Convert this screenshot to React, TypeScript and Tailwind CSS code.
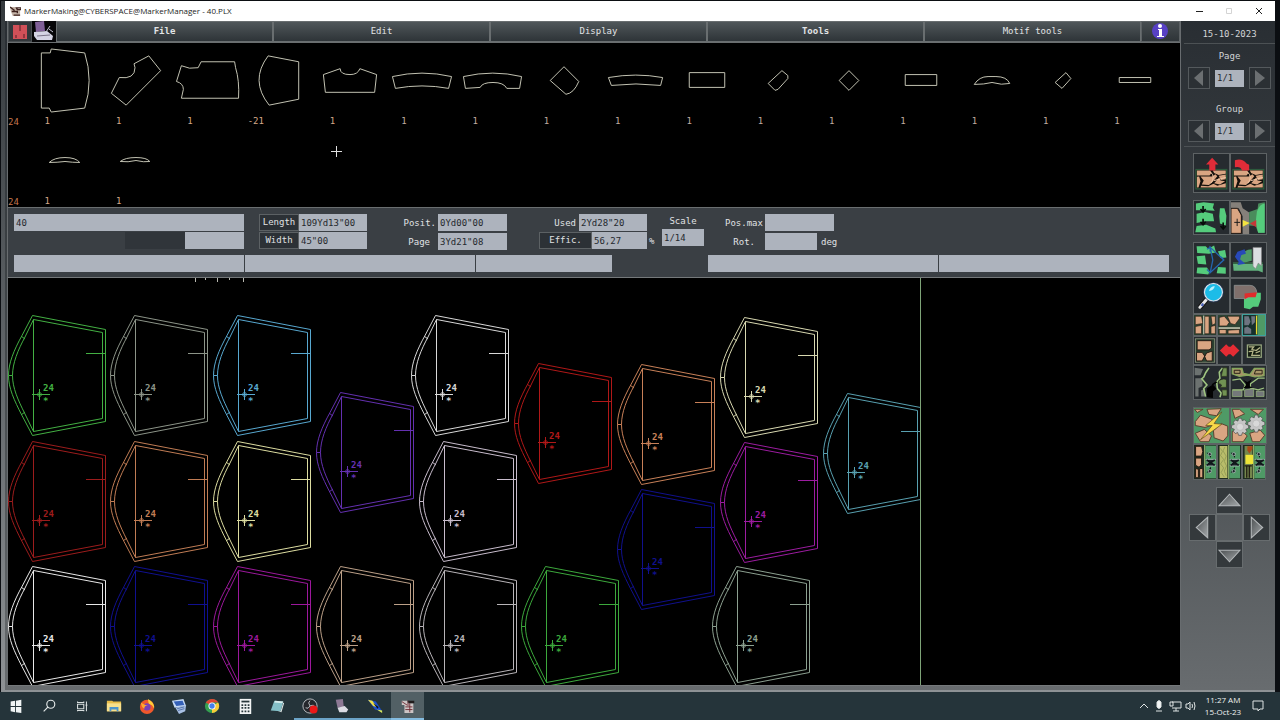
import type { ReactNode } from 'react';

const MENUS = [
  { label: 'File', bold: true },
  { label: 'Edit', bold: false },
  { label: 'Display', bold: false },
  { label: 'Tools', bold: true },
  { label: 'Motif tools', bold: false },
];

// outlines are centred on 0,0
const PIECES = [
  { qty: '1', d: 'M-24-28L-15-28L-14-32L20-28Q29 0 20 28L-14 32L-16 28L-24 28Z' },
  { qty: '1', d: 'M13-25L25-10L-10 25L-25 13L-17-3Q-1-1 -1-13L-2-17Z' },
  { qty: '1', d: 'M-27-15Q-19-11 -10-13L-7-19L27-19L28-13Q32 0 31 18L-27 18L-25 9Q-25 3 -32 1Z' },
  { qty: '-21', d: 'M-11-25L20-19L20 19L-10 25Q-30 0 -11-25Z' },
  { qty: '1', d: 'M-27-6L-10-12Q-10-6 0-6Q8-6 10-12L27-6L25 12L-25 12Z' },
  { qty: '1', d: 'M-30-4Q0-11 30-4L27 8Q0 3 -27 8Z' },
  { qty: '1', d: 'M-30-4Q0-11 29-4L27 8L14 8Q11 2 0 2Q-11 2 -13 7L-28 8Z' },
  { qty: '1', d: 'M0-14L15 1Q10 13 2 14L-14 0Z' },
  { qty: '1', d: 'M-28-3Q0-8 27-3L25 5Q0 2 -25 5Z' },
  { qty: '1', d: 'M-18-8H18V7H-18Z' },
  { qty: '1', d: 'M4-10L10-5L10-2L0 9L-3 10L-10 3Z' },
  { qty: '1', d: 'M0-10L10 0L0 10L-10 0Z' },
  { qty: '1', d: 'M-16-6H16V5H-16Z' },
  { qty: '1', d: 'M-18 4Q-13-4 -4-4H4Q15-4 18 3Q10 5 0 2Q-8 4 -18 4Z' },
  { qty: '1', d: 'M3-8L8-2L-1 8L-8 2Z' },
  { qty: '1', d: 'M-16-3H16V2H-16Z' },
  { qty: '1', d: 'M-16 2Q-11-3 0-3Q11-3 15 2Q8 2 0 1Q-8 2 -16 2Z' },
  { qty: '1', d: 'M-16 1Q-11-3 0-3Q11-3 14 1Q8 2 0 0Q-8 2 -16 1Z' },
];

const PLACED = [
  { x: 0, y: 37, color: '#43b043' },
  { x: 102, y: 37, color: '#8c9488' },
  { x: 205, y: 37, color: '#58a8d0' },
  { x: 308, y: 114, color: '#6430b0' },
  { x: 403, y: 37, color: '#d8d8d8' },
  { x: 506, y: 85, color: '#b01818' },
  { x: 609, y: 86, color: '#c88058' },
  { x: 712, y: 39, color: '#d8d8b0' },
  { x: 815, y: 115, color: '#58a0b0' },
  { x: 0, y: 163, color: '#9c1c1c' },
  { x: 102, y: 163, color: '#c07c54' },
  { x: 205, y: 163, color: '#dcdca0' },
  { x: 411, y: 163, color: '#c8bccc' },
  { x: 712, y: 164, color: '#9c1ca0' },
  { x: 609, y: 211, color: '#10108c' },
  { x: 0, y: 288, color: '#e8e8e8' },
  { x: 102, y: 288, color: '#101090' },
  { x: 205, y: 288, color: '#9c189c' },
  { x: 308, y: 288, color: '#bca088' },
  { x: 411, y: 288, color: '#b8b4b8' },
  { x: 513, y: 288, color: '#3ca83c' },
  { x: 704, y: 288, color: '#8ca090' },
];

const FIELD = 'bg-[#adb3bd] text-[#25292e] px-[2px] outline-none min-w-0';

function Field({ id, label, value, className }: { id: string; label?: string; value: string; className: string }) {
  return <input id={id} aria-label={label} defaultValue={value} className={`${FIELD} ${className}`} />;
}

function Piece({ d }: { d: string }) {
  return (
    <svg viewBox="-36 -34 72 68" className="mx-auto block h-[68px] w-[72px]" fill="none" stroke="#c4c4b4" strokeWidth="1">
      <path d={d} />
    </svg>
  );
}

function PlacedPiece({ x, y, color }: { x: number; y: number; color: string }) {
  return (
    <div className="absolute h-[122px] w-[100px]" style={{ left: x, top: y, color }}>
      <svg viewBox="0 0 100 122" className="block h-full w-full" fill="none" stroke="currentColor" strokeWidth="1">
        <path d="M24.5 .5L97.5 14.5V106.5L24.5 120.5L14 100.5C6 85 .5 73 .5 60.5C.5 48 6 35 14 20.5Z" />
        <path d="M25.5 4.5L94.5 17.5V103.5L25.5 116.5L17 99C10 85 4.5 73 4.5 60.5C4.5 48 10 35 17 22Z" />
        <path d="M25.5 4.5V116.5M78 38.5H98M.5 60.5H4.5M13 21L17 24M13 100L17 97" />
        <path d="M24 79.5H42M31.5 74V85M31.5 77L34 79.5L31.5 82L29 79.5Z" />
      </svg>
      <span className="absolute left-[35px] top-[67px] text-[9px] font-bold leading-[12px]">24</span>
      <span className="absolute left-[35px] top-[80px] text-[9px] font-bold leading-[12px]">*</span>
    </div>
  );
}

function ToolButton({ label, className = 'border-[#5d6264]', children }: { label: string; className?: string; children: ReactNode }) {
  return (
    <button aria-label={label} className={`min-h-0 border bg-[#262b2f] ${className}`}>
      {children}
    </button>
  );
}

function Art({ box = '0 0 108 108', children }: { box?: string; children: ReactNode }) {
  return (
    <svg viewBox={box} preserveAspectRatio="none" className="block h-full w-full">
      {children}
    </svg>
  );
}

const TAN = '#d9a582';
const GREEN = '#55cc7c';
const LEAF = '#4f9a66';

function Bricks() {
  return (
    <g>
      <rect x="4" y="47" width="99" height="65" fill="#2c5a3c" />
      <rect x="8" y="51" width="91" height="57" fill="#15100c" />
      <g fill={TAN}>
        <path d="M9 52H50L54 60L48 68H9ZM58 52H98V62L76 66L62 60Z" />
        <path d="M9 72L16 71L20 86L14 106H9ZM20 71H56L66 64L72 70L58 88L46 98L24 96L30 84Z" />
        <path d="M76 69L98 65V80L84 82ZM62 92L78 74L82 84L96 86L80 96ZM22 100L44 102L60 94L72 100L98 92V106H20Z" />
      </g>
      <path d="M50 56Q68 72 52 92M62 84L98 74" stroke="#f0c8a8" strokeWidth="3" fill="none" />
    </g>
  );
}

function Arrow({ dir }: { dir: 'up' | 'down' | 'left' | 'right' }) {
  const shapes = {
    up: 'M2 17L12 6L22 17Z',
    down: 'M2 8H22L12 19Z',
    left: 'M17 2V22L6 12Z',
    right: 'M7 2V22L18 12Z',
  };
  return (
    <svg viewBox="0 0 24 24" className="block h-full w-full">
      <defs>
        <linearGradient id={`shade-${dir}`} x1="0" x2="1" y1="0" y2="1">
          <stop offset="0" stopColor="#4c5052" />
          <stop offset="1" stopColor="#a4a8aa" />
        </linearGradient>
      </defs>
      <path d={shapes[dir]} fill={`url(#shade-${dir})`} stroke="#b4b8ba" strokeWidth="1" />
    </svg>
  );
}

function Pager({ label, id }: { label: string; id: string }) {
  return (
    <div className="flex h-[53px] flex-col items-center">
      <label htmlFor={id} className="h-[22px] leading-[22px]">{label}</label>
      <div className="flex h-[22px] items-center gap-[5px]">
        <button aria-label={`${label} back`} className="h-[22px] w-[22px] border border-[#54595c] bg-[#2b3034]">
          <svg viewBox="0 0 20 20" className="block h-full w-full"><path d="M14 2V18L5 10Z" fill="#6b6f71" /></svg>
        </button>
        <Field id={id} value="1/1" className="h-[17px] w-[29px]" />
        <button aria-label={`${label} forward`} className="h-[22px] w-[22px] border border-[#54595c] bg-[#2b3034]">
          <svg viewBox="0 0 20 20" className="block h-full w-full"><path d="M5 2V18L15 10Z" fill="#6b6f71" /></svg>
        </button>
      </div>
    </div>
  );
}

const GEAR = 'M-4-24H4L6-17L12-20L18-14L15-8L24-4V4L16 7L19 13L13 19L7 16L4 24H-4L-7 16L-13 19L-19 13L-16 7L-24 4V-4L-16-7L-19-13L-13-19L-6-16Z';

function NestedStrip({ kind }: { kind: 'pieces' | 'plain' | 'marked' }) {
  return (
    <Art box="0 0 72 104">
      <rect width="72" height="104" fill="#1c2a20" />
      <rect x="36" y="2" width="34" height="100" fill={LEAF} />
      {kind === 'pieces' && (
        <g fill={TAN} stroke="#22180f" strokeWidth="3">
          <path d="M5 4H24L28 20L24 34H5ZM5 40H24V60L16 68L5 62ZM5 72L14 74V100H5ZM18 72H28V100H18Z" />
        </g>
      )}
      {kind === 'plain' && (
        <g>
          <rect x="5" y="3" width="25" height="98" fill="#b9bd6a" />
          <path d="M8 10L14 20L8 32L18 44L8 58L18 70L10 84L20 98M22 6L16 18L26 34L20 50L27 64L20 80L26 94" stroke="#83904c" strokeWidth="2" fill="none" />
        </g>
      )}
      {kind === 'marked' && (
        <g>
          <rect x="5" y="3" width="25" height="98" fill="#74864c" />
          <path d="M14 4H30V12L20 26L14 16Z" fill="#a84818" />
          <rect x="8" y="30" width="24" height="28" fill="#eee438" />
          <path d="M5 64H28M12 64V100M20 66V100" stroke="#1d1710" strokeWidth="4" />
        </g>
      )}
      <path d="M34 0V104" stroke="#a8c878" strokeWidth="3" />
      <path d="M40 24L54 40V24ZM40 84L54 66V84Z" fill="#11181a" />
      <g stroke="#cdd8d8" strokeWidth="2" fill="#1b2428">
        <circle cx="50" cy="28" r="5" />
        <circle cx="50" cy="80" r="5" />
        <path d="M38 44H68L58 54L68 64H38L46 54Z" />
      </g>
      <path d="M40 46L66 62M66 46L40 62" stroke="#10181a" strokeWidth="5" />
    </Art>
  );
}

function ToolPalette() {
  return (
    <div className="mx-auto flex w-[74px] flex-col gap-[7px]">
      <div className="grid h-[40px] grid-cols-2">
        <ToolButton label="Take out">
          <Art box="0 0 108 120">
            <Bricks />
            <path d="M56 12L75 33H66V52H47V33H37Z" fill="#e02c38" />
          </Art>
        </ToolButton>
        <ToolButton label="Swap out">
          <Art box="0 0 108 120">
            <Bricks />
            <path d="M12 20Q34 12 48 30L56 34V52H34Q30 38 12 42Z" fill="#e02c38" />
          </Art>
        </ToolButton>
      </div>

      <div className="grid h-[35px] grid-cols-2">
        <ToolButton label="Drop pieces">
          <Art>
            <path d="M6 8L30 4L62 8L58 22L64 32L36 30L6 30ZM8 42L34 36L58 42L62 66L34 66L8 72ZM8 82L38 78L66 90L68 102L4 102ZM80 24L94 24L100 48L98 80L80 74L78 50Z" fill={GREEN} />
            <path d="M28 16V34M28 58V76M90 70V90M20 26L28 36L36 26M20 68L28 78L36 68M82 82L90 92L98 82" stroke="#060c08" strokeWidth="5" fill="none" />
          </Art>
        </ToolButton>
        <ToolButton label="Bring together">
          <Art>
            <path d="M0 4H30L36 24L56 38V108H36V50L24 24H0Z" fill="#85807a" />
            <path d="M0 24H20L32 46V106H0Z" fill={TAN} stroke="#1b1410" strokeWidth="3" />
            <path d="M56 36L82 26L84 8L104 4V104H84L76 82L56 80Z" fill="#4a8c5c" />
            <path d="M80 34Q88 10 104 8V104H84L76 70Z" fill={GREEN} />
            <path d="M10 70H28M19 58V82" stroke="#181818" strokeWidth="3" />
            <path d="M36 62L58 72L36 84Z" fill="#f4e440" />
            <path d="M78 62L58 74L78 86Z" fill="#c43838" />
          </Art>
        </ToolButton>
      </div>

      <div>
        <div className="grid h-[36px] grid-cols-2">
          <ToolButton label="Rotate group">
            <Art>
              <path d="M8 10H36L44 18L62 8L68 30L46 34L10 32ZM8 42L34 40L38 68L12 66ZM10 78H40L48 90L44 100L8 96ZM74 26L96 22L100 46L82 48ZM74 76L98 78V98L70 96Z" fill={GREEN} />
              <path d="M50 14L92 54L50 94L58 54ZM40 20L50 14V28M84 44L92 54L80 64M50 94L40 84" stroke="#2466b0" strokeWidth="4" fill="none" />
            </Art>
          </ToolButton>
          <ToolButton label="Flip">
            <Art>
              <path d="M24 50Q34 22 64 20V56L34 64Z" fill={LEAF} />
              <path d="M6 62H98V94L84 88H8Z" fill="#62b27e" />
              <path d="M6 64H100" stroke="#17321e" strokeWidth="3" />
              <path d="M68 14H94V72L84 64L76 82L68 74Z" fill="#dcdfe2" stroke="#888" strokeWidth="2" />
              <path d="M42 20L20 28L12 44L24 60L20 70L44 66L28 52L32 38L46 34Z" fill="#2849b8" />
            </Art>
          </ToolButton>
        </div>
        <div className="grid h-[36px] grid-cols-2">
          <ToolButton label="Zoom">
            <Art>
              <path d="M38 66L18 90" stroke="#151515" strokeWidth="16" />
              <path d="M38 66L18 90" stroke="#e8e8e8" strokeWidth="9" strokeLinecap="round" />
              <path d="M28 78L24 86" stroke="#4860b8" strokeWidth="7" />
              <circle cx="60" cy="42" r="28" fill="#1cbce8" stroke="#d8e0e8" strokeWidth="4" />
              <circle cx="60" cy="42" r="31" fill="none" stroke="#20365c" strokeWidth="2" />
              <path d="M46 38Q50 24 64 22Q62 36 46 38Z" fill="#b8f2ff" />
            </Art>
          </ToolButton>
          <ToolButton label="Overlap">
            <Art>
              <path d="M42 44H92V64L84 88H68L58 96L40 92V64Z" fill={GREEN} />
              <path d="M10 20H58Q78 20 80 46L48 62H10Z" fill="#80706c" stroke="#98a0a0" strokeWidth="2" />
              <path d="M42 46L80 42L76 58H52L42 64Z" fill="#e02c2c" />
            </Art>
          </ToolButton>
        </div>
        <div className="grid h-[22px] grid-cols-3">
          <ToolButton label="Align columns">
            <Art box="0 0 72 66">
              <rect width="72" height="66" fill="#2c4434" />
              <path d="M4 4H24L28 28L4 32ZM4 38L24 34V62H4ZM34 4H48V62H34ZM54 4H68V28L58 34ZM54 38L68 34V62H54Z" fill={TAN} stroke="#1e1610" strokeWidth="2" />
              <path d="M31 2V64" stroke="#e8ead0" strokeWidth="3" />
            </Art>
          </ToolButton>
          <ToolButton label="Align rows">
            <Art box="0 0 72 66">
              <rect width="72" height="66" fill="#2c4434" />
              <path d="M4 8L20 4L36 24L28 36H4ZM30 4H68V12L54 32L40 28ZM4 48H26V62H4ZM32 50L68 48V62H32Z" fill={TAN} stroke="#1e1610" strokeWidth="2" />
              <path d="M2 43H70" stroke="#f4f0d8" strokeWidth="4" />
            </Art>
          </ToolButton>
          <ToolButton label="Column limit" className="border-[#3fa09c]">
            <Art box="0 0 72 66">
              <rect width="72" height="66" fill="#16302c" />
              <path d="M4 4H18L24 22L18 34H4ZM4 42L14 38L26 46V62H4ZM26 4H38V24L28 34Z" fill="#6d7480" />
              <rect x="46" y="0" width="26" height="66" fill={LEAF} />
              <path d="M43 2V64" stroke="#e8d830" strokeWidth="4" />
            </Art>
          </ToolButton>
        </div>
        <div className="grid h-[29px] grid-cols-3">
          <ToolButton label="Frame">
            <Art box="0 0 72 88">
              <rect x="4" y="6" width="62" height="76" fill="#2b4030" stroke="#a8b090" strokeWidth="2" />
              <path d="M10 12H56V36L48 42H10ZM8 50H26L34 62L26 78H8ZM40 52L58 46V78H40L34 64Z" fill={TAN} stroke="#1e1610" strokeWidth="3" />
            </Art>
          </ToolButton>
          <ToolButton label="Shift sideways">
            <Art box="0 0 72 88">
              <path d="M6 44L26 24L34 32H40L48 24L68 44L48 64L40 56H34L26 64Z" fill="#e42c34" />
            </Art>
          </ToolButton>
          <ToolButton label="Fit all">
            <Art box="0 0 72 88">
              <rect x="14" y="26" width="44" height="40" fill="#131c10" stroke="#98a880" strokeWidth="4" />
              <path d="M18 32H34L28 40L42 44L54 34M18 48L32 46L28 60H54M40 52L54 46" stroke="#b4b488" strokeWidth="4" fill="none" />
            </Art>
          </ToolButton>
        </div>
        <div className="grid h-[35px] grid-cols-2">
          <ToolButton label="Split marker">
            <Art>
              <path d="M2 6L28 10L20 30H2ZM4 40H26V66L14 72V100H4ZM22 80L34 74V100H22Z" fill="#6c7270" />
              <path d="M46 6L36 22L30 36L24 42L40 62L30 74L36 100M88 6L78 20L80 40L70 52L72 74L84 88L80 102" stroke="#9fc480" strokeWidth="5" fill="none" />
              <path d="M90 6H102V34L84 34ZM76 48Q94 38 100 46V70H80Q92 60 76 58ZM86 78H102V98H88Z" fill="#719253" stroke="#252a16" strokeWidth="2" />
              <path d="M42 100V74L58 64L66 74L56 82V102ZM56 62L70 52" fill="#030303" stroke="#030303" strokeWidth="5" />
            </Art>
          </ToolButton>
          <ToolButton label="Join marker">
            <Art>
              <path d="M4 8H34L38 24L58 28L72 8H102V32L74 36L52 30L26 34L4 26Z" fill="#a89668" stroke="#86a85c" strokeWidth="4" />
              <path d="M10 14H28V24H10ZM76 14H96V26H72Z" fill="none" stroke="#241e14" strokeWidth="3" />
              <path d="M4 46L28 42L44 62L38 78H4M104 40H84L60 58V72L84 78L102 72" stroke="#9fc480" strokeWidth="4" fill="none" />
              <path d="M4 80H34V100H4ZM42 78L70 74V100H42ZM78 82H102V100H78Z" fill="#74787a" stroke="#9fc480" strokeWidth="2" />
              <path d="M36 44L50 52L64 44L58 56V66L68 72H38L46 64V56Z" fill="#020202" />
            </Art>
          </ToolButton>
        </div>
      </div>

      <div>
        <div className="grid h-[37px] grid-cols-2">
          <ToolButton label="Quick nest">
            <Art>
              <rect width="108" height="108" fill={LEAF} />
              <path d="M2 4H28L10 14ZM40 4L84 2L70 24L46 20ZM4 42L20 22L54 34L66 50L34 60L4 54ZM4 78L32 66L54 86L46 104H20ZM60 70L84 48L104 56V86L90 102L62 92Z" fill={TAN} stroke="#5a4030" strokeWidth="3" />
              <path d="M86 12L36 54H56L20 98L86 50L62 48Z" fill="#f6d848" stroke="#60481c" strokeWidth="2" />
            </Art>
          </ToolButton>
          <ToolButton label="Automatic nest">
            <Art>
              <rect width="108" height="108" fill={LEAF} />
              <path d="M4 4H26L42 18L12 32ZM60 4H100L84 20ZM4 72L30 68L50 86L38 104H4ZM58 78L90 68L104 84L88 104H66Z" fill={TAN} stroke="#5a4030" strokeWidth="3" />
              <g fill="#c6c6c6" stroke="#4c4c4c" strokeWidth="2">
                <path transform="translate(28 58) scale(1.1)" d={GEAR} />
                <path transform="translate(78 48) scale(1.1)" d={GEAR} />
                <circle cx="28" cy="58" r="11" fill="#d8d8d8" stroke="#b4b4b4" />
                <circle cx="78" cy="48" r="11" fill="#d8d8d8" stroke="#b4b4b4" />
              </g>
            </Art>
          </ToolButton>
        </div>
        <div className="grid h-[36px] grid-cols-3">
          <ToolButton label="Compact pieces"><NestedStrip kind="pieces" /></ToolButton>
          <ToolButton label="Compact fabric"><NestedStrip kind="plain" /></ToolButton>
          <ToolButton label="Compact marked"><NestedStrip kind="marked" /></ToolButton>
        </div>
      </div>
    </div>
  );
}

function Sidebar() {
  return (
    <aside className="flex w-[91px] shrink-0 flex-col pt-[2px] text-center text-[9px] text-[#d2d4d6]">
      <div className="h-[21px] border-b border-[#4c5154] leading-[22px]">15-10-2023</div>
      <div className="mb-[6px] h-[103px] border-b border-[#4c5154] pt-px">
        <Pager id="page-no" label="Page" />
        <Pager id="group-no" label="Group" />
      </div>
      <ToolPalette />
      <div className="mx-auto mt-[7px] grid grid-cols-3 grid-rows-3">
        {(['up', 'left', 'right', 'down'] as const).map((dir) => (
          <button
            key={dir}
            aria-label={`Pan ${dir}`}
            className={`h-[27px] w-[27px] border border-[#676c6e] bg-[#34393c] ${
              { up: 'col-start-2 row-start-1', left: 'col-start-1 row-start-2', right: 'col-start-3 row-start-2', down: 'col-start-2 row-start-3' }[dir]
            }`}
          >
            <Arrow dir={dir} />
          </button>
        ))}
        <span className="col-start-2 row-start-2 border border-[#676c6e]" />
      </div>
    </aside>
  );
}

function InfoPanel() {
  return (
    <section className="h-[69px] shrink-0 bg-[#3a3f44] px-[6px] pt-[6px] text-[9px] text-[#e0e2e4]">
      <div className="flex h-[35px] items-start">
        <div className="flex w-[230px] flex-col gap-px">
          <Field id="marker-name" label="Marker name" value="40" className="h-[17px]" />
          <div className="flex h-[17px] justify-end">
            <span className="w-[60px] bg-[#30353a]" />
            <Field id="marker-code" label="Marker code" value="" className="w-[59px]" />
          </div>
        </div>
        <div className="ml-[15px] grid grid-cols-[40px_68px] gap-y-px">
          <label htmlFor="length" className="h-[17px] border border-[#5c6164] bg-[#2c3136] text-center leading-[15px]">Length</label>
          <Field id="length" value={'109Yd13"00'} className="h-[17px]" />
          <label htmlFor="width" className="h-[17px] border border-[#5c6164] bg-[#2c3136] text-center leading-[15px]">Width</label>
          <Field id="width" value={'45"00'} className="h-[17px]" />
        </div>
        <div className="ml-[31px] grid grid-cols-[38px_2px_69px] gap-y-px">
          <label htmlFor="posit" className="text-right leading-[18px]">Posit.</label>
          <Field id="posit" value={'0Yd00"00'} className="col-start-3 h-[17px]" />
          <label htmlFor="page-pos" className="pr-[6px] text-right leading-[18px]">Page</label>
          <Field id="page-pos" value={'3Yd21"08'} className="col-start-3 h-[17px]" />
        </div>
        <div className="ml-[32px] flex w-[118px] flex-col gap-px">
          <div className="flex h-[17px] justify-end gap-[3px]">
            <label htmlFor="used" className="leading-[18px]">Used</label>
            <Field id="used" value={'2Yd28"20'} className="mr-[10px] h-[17px] w-[68px]" />
          </div>
          <div className="flex h-[17px]">
            <label htmlFor="effic" className="h-[17px] w-[53px] border border-[#5c6164] bg-[#2c3136] text-center leading-[15px]">Effic.</label>
            <Field id="effic" value="56,27" className="h-[17px] w-[55px]" />
            <span className="pl-[2px] leading-[18px]">%</span>
          </div>
        </div>
        <div className="ml-[5px] flex w-[42px] flex-col">
          <label htmlFor="scale" className="h-[15px] text-center leading-[15px]">Scale</label>
          <Field id="scale" value="1/14" className="h-[17px]" />
        </div>
        <div className="ml-[21px] grid grid-cols-[37px_3px_69px] gap-y-px">
          <label htmlFor="posmax" className="text-right leading-[18px]">Pos.max</label>
          <Field id="posmax" value="" className="col-start-3 h-[17px]" />
          <label htmlFor="rot" className="pr-[7px] text-right leading-[18px]">Rot.</label>
          <div className="col-start-3 flex gap-[4px]">
            <Field id="rot" value="" className="h-[17px] w-[52px] shrink-0" />
            <span className="leading-[18px]">deg</span>
          </div>
        </div>
      </div>
      <div className="mt-[6px] flex h-[17px] gap-px">
        <Field id="msg-1" label="Message 1" value="" className="w-[230px]" />
        <Field id="msg-2" label="Message 2" value="" className="w-[230px]" />
        <Field id="msg-3" label="Message 3" value="" className="w-[136px]" />
        <Field id="msg-4" label="Message 4" value="" className="ml-[95px] w-[230px]" />
        <Field id="msg-5" label="Message 5" value="" className="w-[230px]" />
      </div>
    </section>
  );
}

function PieceTray() {
  return (
    <section className="relative h-[166px] shrink-0 overflow-hidden border-y border-[#6a6e70] bg-black text-[9px] leading-[12px]">
      <span className="absolute left-0 top-[73px] text-[#c4754c]">24</span>
      <span className="absolute left-0 top-[153px] text-[#c4754c]">24</span>
      <div className="grid grid-cols-16 pl-[21px] pr-[10px] pt-[4px]">
        {PIECES.map((p, i) => (
          <div key={i} className="flex h-[80px] flex-col gap-px">
            <Piece d={p.d} />
            <div className={`w-[21px] text-right ${i < 5 || i > 15 ? 'text-[#d4a888]' : 'text-[#c0aca0]'}`}>{p.qty}</div>
          </div>
        ))}
      </div>
      <svg viewBox="0 0 11 11" className="absolute left-[323px] top-[103px] h-[11px] w-[11px]" stroke="#e0e0e0">
        <path d="M5.5 0V11M0 5.5H11" />
      </svg>
    </section>
  );
}

function MarkerCanvas() {
  return (
    <section className="relative min-h-0 flex-1 overflow-hidden border-y border-[#75797b] bg-black">
      <svg viewBox="0 0 50 5" className="absolute left-[187px] top-0 h-[5px] w-[50px]" stroke="#b8b8b0">
        <path d="M.5 0V4M10.5 0V2M22.5 0V4M34.5 0V2M48.5 0V4" />
      </svg>
      {PLACED.map((p, i) => (
        <PlacedPiece key={i} {...p} />
      ))}
      <div className="absolute inset-y-0 left-[912px] w-px bg-[#7ea478]" />
    </section>
  );
}

function MenuBar() {
  return (
    <nav className="flex h-[21px] shrink-0 text-[9px] text-[#e2e4e6]">
      <button aria-label="Marker" className="w-[24px] border border-[#4a4f52] bg-[#32373b]">
        <svg viewBox="0 0 22 19" className="block h-full w-full">
          <rect x="4" y="3" width="14" height="14" fill="#d05058" />
          <path d="M11 3V9M7 13V16M15 12V16" stroke="#541c24" strokeWidth="1" fill="none" />
        </svg>
      </button>
      <button aria-label="Digitizer" className="w-[24px] bg-[#060608]">
        <svg viewBox="0 0 24 21" className="block h-full w-full">
          <path d="M3 1L12 0L13 10L4 11Z" fill="#806098" />
          <path d="M2 11L15 10L21 15L20 19H5L2 15Z" fill="#d4d4e4" />
          <path d="M18 5L14 11M17 8L21 11" stroke="#c8c8d8" />
          <path d="M5 15L18 14" stroke="#7a7488" />
        </svg>
      </button>
      {MENUS.map((m) => (
        <button
          key={m.label}
          className={`flex-1 border border-[#696e70] bg-linear-to-b from-[#50575a] to-[#2e3438] ${m.bold ? 'font-bold' : ''}`}
        >
          {m.label}
        </button>
      ))}
      <button aria-label="Information" className="w-[39px] border border-[#5c6164] bg-linear-to-b from-[#474d50] to-[#2e3438]">
        <svg viewBox="0 0 37 19" className="block h-full w-full">
          <circle cx="18" cy="9" r="8" fill="#5740c4" />
          <path d="M16 7H20V14H22V15H15V14H17V8H16Z" fill="#fff" />
          <circle cx="18" cy="4" r="2" fill="#fff" />
        </svg>
      </button>
    </nav>
  );
}

const TASKS: { name: string; running?: boolean; active?: boolean; art: ReactNode }[] = [
  { name: 'Start', art: <path d="M3 4L8 3V9H3ZM9 3L15 2V9H9ZM3 10H8V16L3 15ZM9 10H15V17L9 16Z" fill="#f0f4f4" /> },
  {
    name: 'Search',
    art: (
      <g fill="none" stroke="#e4e8e8" strokeWidth="1.3">
        <circle cx="11" cy="7" r="4.5" />
        <path d="M8 10L3 15" />
      </g>
    ),
  },
  {
    name: 'Task view',
    art: <path d="M4 7H11V12H4ZM4 4V5H11V4M4 15V14H11V15M14 4V15M13 8H15" fill="none" stroke="#d8dede" strokeWidth="1.2" />,
  },
  {
    name: 'Explorer',
    art: (
      <g>
        <path d="M1 3H7L8 4H17V15H1Z" fill="#e8bc48" />
        <path d="M1 6H17V15H1Z" fill="#f8e08c" />
        <path d="M4 15V10H14V15H12V13H6V15Z" fill="#4c94cc" />
      </g>
    ),
  },
  {
    name: 'Firefox',
    art: (
      <g>
        <circle cx="9" cy="10" r="8" fill="#f0582c" />
        <path d="M10 1Q18 5 17 12Q15 7 11 7Z" fill="#ffcc38" />
        <circle cx="9" cy="10" r="4" fill="#7840b8" />
        <path d="M2 5Q6 8 10 8Q6 9 6 12Q3 11 2 5Z" fill="#fca830" />
      </g>
    ),
  },
  {
    name: 'Remote desktop',
    art: (
      <g>
        <path d="M1 3L14 1L17 9L4 11Z" fill="#c4d8f4" />
        <path d="M3 4L13 3L15 8L6 9Z" fill="#3460b8" />
        <path d="M5 11L17 8L16 15L9 18Z" fill="#a8c0e4" />
        <path d="M7 12L15 10M8 14L15 12" stroke="#4868a4" />
      </g>
    ),
  },
  {
    name: 'Chrome',
    art: (
      <g>
        <circle cx="9" cy="9" r="8" fill="#34a050" />
        <path d="M9 9L2 5Q5 1 9 1Q14 1 16 5H9Z" fill="#e04434" />
        <path d="M9 9L16 5Q19 11 14 15Q12 17 9 17Z" fill="#f8cc38" />
        <circle cx="9" cy="9" r="4" fill="#fff" />
        <circle cx="9" cy="9" r="3" fill="#4480ec" />
      </g>
    ),
  },
  {
    name: 'Calculator',
    art: (
      <g>
        <rect x="3" y="1" width="13" height="17" fill="#f2f4f4" />
        <path d="M5 4H14" stroke="#2a383c" strokeWidth="2" />
        <path d="M5 8H14M5 11H14M5 15H14" stroke="#2a383c" strokeWidth="2" strokeDasharray="2 1.5" />
      </g>
    ),
  },
  {
    name: 'Notes',
    art: (
      <g>
        <path d="M6 3L16 4L13 15L2 14Z" fill="#84c0c8" />
        <path d="M7 3L16 4L15 6L6 5Z" fill="#d8ecec" />
        <path d="M10 15L13 15L16 5L17 6L14 16Z" fill="#dce4e4" />
      </g>
    ),
  },
  {
    name: 'Recorder',
    running: true,
    art: (
      <g>
        <circle cx="9" cy="9" r="8" fill="#24272c" stroke="#c4c8cc" />
        <path d="M9 9Q6 5 9 3M9 9Q14 7 14 10M9 9Q7 13 4 11" stroke="#c4c8cc" fill="none" />
        <circle cx="13" cy="13" r="4.5" fill="#ec1818" />
      </g>
    ),
  },
  {
    name: 'Digitizer',
    running: true,
    art: (
      <g>
        <path d="M2 2L10 1L11 10L4 11Z" fill="#8c7894" />
        <path d="M4 11L12 9L16 13L14 16H6Z" fill="#dcdce4" />
      </g>
    ),
  },
  {
    name: 'Design',
    running: true,
    art: (
      <g>
        <path d="M1 2L10 4L17 15L9 13Z" fill="#1c50cc" />
        <path d="M1 2L6 3L11 10L7 9Z" fill="#f0e048" />
        <path d="M7 6L13 10L12 12Z" fill="#101010" />
        <path d="M11 13L17 14L17 17Z" fill="#d8e858" />
      </g>
    ),
  },
  {
    name: 'MarkerMaking',
    running: true,
    active: true,
    art: (
      <g>
        <path d="M2 3H8L9 6H15V17H5V8H2Z" fill="#ccc4c4" />
        <path d="M2 4L8 8M6 10H14M6 13H14M9 3V9M11 6V16" stroke="#6c2830" strokeWidth="1" />
        <path d="M9 3H16V6H10Z" fill="#201c1c" />
      </g>
    ),
  },
];

function Taskbar() {
  return (
    <footer className="flex h-[28px] shrink-0 items-stretch bg-[#25343a] font-['Open_Sans',sans-serif] text-[#f0f2f2]">
      <div className="grid w-[424px] shrink-0 grid-cols-13">
        {TASKS.map((t) => (
          <button
            key={t.name}
            aria-label={t.name}
            className={`flex items-center justify-center border-b-2 pt-[2px] ${
              t.active ? 'border-[#84bce0] bg-[#526065]' : t.running ? 'border-[#6ca4c8]' : 'border-transparent'
            }`}
          >
            <svg viewBox="0 0 18 18" className="h-[16px] w-[16px]">{t.art}</svg>
          </button>
        ))}
      </div>
      <div className="ml-auto flex items-center pr-[15px]">
        <svg viewBox="0 0 60 16" className="h-[16px] w-[60px]" fill="none" stroke="#dfe4e4">
          <path d="M2 10L6 6L10 10" />
          <path d="M19 4Q21 1 23 4V9Q21 12 19 9Z" fill="#f2f4f4" />
          <path d="M18 13H24M34 4H43V10H34M38 10V13M35 13H41M32 4V8H35V4Z" />
          <path d="M48 6H50L52 4V12L50 10H48ZM54 6Q55 8 54 10M56 4Q58 8 56 12" />
        </svg>
        <div className="ml-[4px] w-[42px] text-center text-[8px] leading-[12px]">
          <div>11:27 AM</div>
          <div>15-Oct-23</div>
        </div>
        <svg viewBox="0 0 14 14" className="ml-[7px] h-[14px] w-[14px]" fill="none" stroke="#dfe4e4">
          <path d="M2 2H12V10H9L7 12V10H2Z" />
        </svg>
      </div>
    </footer>
  );
}

function TitleBar() {
  return (
    <header className="flex h-[20px] shrink-0 items-center bg-white pl-[5px] font-['Open_Sans',sans-serif] text-[8px] text-[#1c1c1c]">
      <svg viewBox="0 0 12 12" className="mr-[3px] h-[11px] w-[11px]">
        <path d="M0 1H6L7 3H11V11H3L1 6Z" fill="#c4b4a8" />
        <path d="M0 1L5 5M7 2H12V4H8ZM2 6H8V8M4 10H11" stroke="#3c201c" strokeWidth="1.5" fill="none" />
      </svg>
      <h1>MarkerMaking@CYBERSPACE@MarkerManager - 40.PLX</h1>
      <div className="ml-auto flex h-full">
        <button aria-label="Minimize" className="w-[30px]">
          <svg viewBox="0 0 30 20" stroke="#222"><path d="M11 10.5H18" /></svg>
        </button>
        <button aria-label="Maximize" className="w-[30px]" disabled>
          <svg viewBox="0 0 30 20" fill="none" stroke="#d4d4d4"><path d="M11.5 7.5H16.5V12.5H11.5Z" /></svg>
        </button>
        <button aria-label="Close" className="w-[30px]">
          <svg viewBox="0 0 30 20" stroke="#222"><path d="M11 7L17 13M17 7L11 13" /></svg>
        </button>
      </div>
    </header>
  );
}

export default function App() {
  return (
    <div className="flex h-screen min-h-[560px] flex-col overflow-hidden bg-[#0b0e12] pt-px font-['DejaVu_Sans_Mono',monospace]">
      <div className="ml-px mr-[5px] flex min-h-0 flex-1 flex-col bg-linear-to-b from-[#34393d] to-[#8e9295] pb-[2px] pl-[4px]">
        <TitleBar />
        <div className="flex min-h-0 flex-1 bg-linear-to-b from-[#292e33] via-[#43484b] to-[#686c6f] pl-[2px]">
          <main className="mr-[3px] flex min-w-0 flex-1 flex-col border-x border-[#686c6f] pb-[4px]">
            <MenuBar />
            <PieceTray />
            <InfoPanel />
            <MarkerCanvas />
          </main>
          <Sidebar />
        </div>
      </div>
      <Taskbar />
    </div>
  );
}
